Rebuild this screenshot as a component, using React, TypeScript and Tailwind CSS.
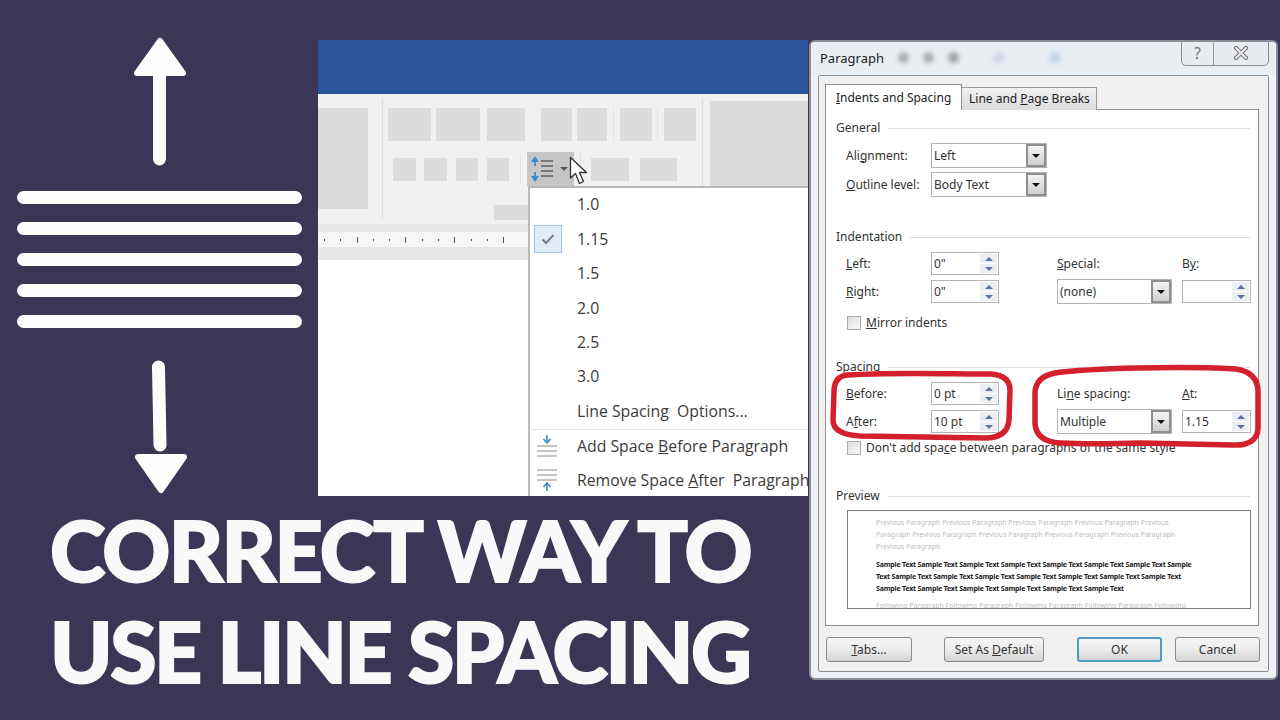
import React from "react";

const Block = ({ className }: { className: string }) => (
  <div className={`bg-[#dcdcdc] ${className}`} />
);

const menuValues = ["1.0", "1.15", "1.5", "2.0", "2.5", "3.0"];

function SideDrawing() {
  return (
    <svg width="318" height="496" viewBox="0 0 318 496" className="shrink-0">
      <g fill="#fefefe" stroke="#fefefe" strokeLinejoin="round" strokeLinecap="round">
        <path d="M160 41 L183 73 L137 73 Z" strokeWidth="6" />
        <path d="M159.5 76 V159" strokeWidth="13" fill="none" />
        <path d="M158.5 367 L160 445" strokeWidth="13" fill="none" />
        <path d="M138 457 L184 457 L161 490 Z" strokeWidth="6" />
        <path d="M23.5 197.5 H295.5 M23.5 228.5 H295.5 M23.5 259.5 H295.5 M23.5 290.5 H295.5 M23.5 321.5 H295.5" strokeWidth="13" fill="none" />
      </g>
    </svg>
  );
}

function LineSpacingIcon() {
  return (
    <svg width="24" height="28" viewBox="0 0 24 28">
      <path d="M5 1 L1 7 H9 Z M5 27 L1 21 H9 Z" fill="#3f8ac4" />
      <path d="M5 6 V11 M5 17 V22" stroke="#3f8ac4" strokeWidth="1.8" />
      <path d="M11 6 H23 M11 11 H23 M11 16 H23 M11 21 H23" stroke="#5f5f5f" strokeWidth="1.3" />
    </svg>
  );
}

function Cursor() {
  return (
    <svg width="20" height="30" viewBox="0 0 20 30" className="absolute left-[251px] top-[116px]">
      <path d="M1.5 1.5 V22 L6.5 17.5 L10.5 27.5 L14.5 25.5 L10.5 16.5 L17.5 16.5 Z" fill="#ffffff" stroke="#2f2f2f" strokeWidth="1.3" strokeLinejoin="round" />
    </svg>
  );
}

function Ruler() {
  const ticks = Array.from({ length: 12 });
  return (
    <div className="h-[15px] bg-[#f6f6f6] flex items-center pl-[6px] gap-[15.3px] mt-[8px]">
      {ticks.map((_, i) => (
        <div key={i} className={i % 3 === 2 ? "w-px h-[6px] bg-[#555555]" : "w-px h-[2px] bg-[#555555]"} />
      ))}
    </div>
  );
}

function SpacingMenu() {
  return (
    <div className="absolute left-[210px] top-[146px] w-[280px] h-[310px] bg-white border-l-2 border-t-2 border-[#b9b9b9] text-[#3b3b3b] text-[15.8px] font-['Open_Sans',sans-serif] overflow-hidden">
      {menuValues.map((v) => (
        <div key={v} className="relative h-[34.4px] flex items-center pl-[47px]">
          {v === "1.15" && (
            <div className="absolute left-[4px] top-[3px] w-[28px] h-[28px] bg-[#e1ebf8] border border-[#a8c4e4] flex items-center justify-center">
              <svg width="14" height="12" viewBox="0 0 14 12">
                <path d="M1.5 6.5 L5 10 L12.5 2" fill="none" stroke="#7c7c7c" strokeWidth="2" />
              </svg>
            </div>
          )}
          {v}
        </div>
      ))}
      <div className="h-[34.4px] flex items-center pl-[47px] whitespace-pre">Line Spacing  Options...</div>
      <div className="h-px bg-[#e3e3e3] ml-[1px]" />
      <div className="relative h-[34px] flex items-center pl-[47px] whitespace-pre">
        <svg width="22" height="24" viewBox="0 0 22 24" className="absolute left-[6px] top-[4px]">
          <path d="M11 1 V7 M7.5 5 L11 9 L14.5 5" fill="none" stroke="#3f8ac4" strokeWidth="1.6" />
          <path d="M1 12 H21 M1 17 H21 M1 22 H21" stroke="#8a8a8a" strokeWidth="1" />
        </svg>
        Add Space <u>B</u>efore Paragraph
      </div>
      <div className="relative h-[34px] flex items-center pl-[47px] whitespace-pre">
        <svg width="22" height="24" viewBox="0 0 22 24" className="absolute left-[6px] top-[4px]">
          <path d="M1 2 H21 M1 7 H21 M1 12 H21" stroke="#8a8a8a" strokeWidth="1" />
          <path d="M11 23 V16 M7.5 19 L11 15 L14.5 19" fill="none" stroke="#3f8ac4" strokeWidth="1.6" />
        </svg>
        Remove Space <u>A</u>fter  Paragraph
      </div>
    </div>
  );
}

function WordPanel() {
  return (
    <div className="relative mt-[40px] w-[490px] h-[456px] bg-white overflow-hidden">
      <div className="h-[54px] bg-[#2b579a]" />
      <div className="h-[130px] bg-[#f1f1f1] flex shadow-[0_1px_2px_rgba(0,0,0,0.15)]">
        <Block className="w-[50px] h-[101px] mt-[14px] shrink-0" />
        <div className="w-px h-[120px] mt-[4px] ml-[14px] bg-[#dedede] shrink-0" />
        <div className="w-[319px] shrink-0">
          <div className="flex mt-[14px]">
            <Block className="w-[43px] h-[33px] ml-[5px]" />
            <Block className="w-[44px] h-[33px] ml-[5px]" />
            <Block className="w-[38px] h-[33px] ml-[7px]" />
            <Block className="w-[31px] h-[33px] ml-[16px]" />
            <Block className="w-[30px] h-[33px] ml-[5px]" />
            <div className="w-px h-[33px] ml-[6px] bg-[#e4e4e4]" />
            <Block className="w-[32px] h-[33px] ml-[6px]" />
            <div className="w-px h-[33px] ml-[5px] bg-[#e4e4e4]" />
            <Block className="w-[32px] h-[33px] ml-[6px]" />
          </div>
          <div className="flex items-center mt-[11px]">
            <Block className="w-[23px] h-[23px] ml-[10px]" />
            <Block className="w-[23px] h-[23px] ml-[8px]" />
            <Block className="w-[22px] h-[23px] ml-[9px]" />
            <Block className="w-[22px] h-[23px] ml-[9px]" />
            <div className="w-px h-[30px] ml-[11px] bg-[#e0e0e0]" />
            <div className="w-[47px] h-[34px] ml-[6px] bg-[#c6c6c6] flex items-center pl-[3px] gap-[6px]">
              <LineSpacingIcon />
              <div className="w-0 h-0 border-x-[4px] border-x-transparent border-t-[4px] border-t-[#555555]" />
            </div>
            <div className="w-px h-[30px] ml-[6px] bg-[#e0e0e0]" />
            <Block className="w-[38px] h-[23px] ml-[10px]" />
            <Block className="w-[37px] h-[23px] ml-[11px]" />
          </div>
          <Block className="w-[34px] h-[15px] ml-[111px] mt-[19px]" />
        </div>
        <div className="w-px h-[120px] mt-[4px] bg-[#dedede] shrink-0" />
        <Block className="w-[98px] h-[123px] mt-[7px] ml-[7px] shrink-0" />
      </div>
      <div className="bg-[#e6e6e6] h-[36px] overflow-hidden">
        <Ruler />
      </div>
      <SpacingMenu />
      <Cursor />
    </div>
  );
}

function Title() {
  return (
    <div className="pl-[50px] pt-[3px] text-[#f9f9fa] font-['Lato',sans-serif] font-black text-[84px] leading-[101px] whitespace-nowrap [-webkit-text-stroke:2px_#f9f9fa]">
      <div className="tracking-[-1.7px]">CORRECT WAY TO</div>
      <div className="tracking-[-2.4px]">USE LINE SPACING</div>
    </div>
  );
}

function SectionLabel({ label, lineClass, className = "" }: { label: string; lineClass?: string; className?: string }) {
  return (
    <div className={`flex items-center h-[16px] pl-[10px] pr-[8px] gap-[8px] ${className}`}>
      <span>{label}</span>
      <div className={`flex-1 h-px bg-[#dcdfe3] ${lineClass ?? ""}`} />
    </div>
  );
}

function DropSelect({ value, className }: { value: string; className: string }) {
  return (
    <div className={`h-[25px] bg-white border border-[#b4b4b4] flex items-center justify-between pl-[2px] ${className}`}>
      <span>{value}</span>
      <div className="w-[20px] h-[23px] bg-gradient-to-b from-[#f4f4f4] to-[#cfcfcf] border-2 border-[#8e8e8e] flex items-center justify-center">
        <div className="w-0 h-0 border-x-[4px] border-x-transparent border-t-[4px] border-t-[#111111]" />
      </div>
    </div>
  );
}

function Spinner({ value, className = "w-[68px]" }: { value: string; className?: string }) {
  return (
    <div className={`h-[23px] bg-white border border-[#b4b4b4] flex items-center justify-between pl-[2px] pr-px ${className}`}>
      <span>{value}</span>
      <div className="w-[17px] h-[19px] flex flex-col gap-px">
        <div className="flex-1 bg-[#eceef2] flex items-center justify-center">
          <div className="w-0 h-0 border-x-[4px] border-x-transparent border-b-[4px] border-b-[#5f6fa8]" />
        </div>
        <div className="flex-1 bg-[#eceef2] flex items-center justify-center">
          <div className="w-0 h-0 border-x-[4px] border-x-transparent border-t-[4px] border-t-[#5f6fa8]" />
        </div>
      </div>
    </div>
  );
}

function CheckRow({ children, className }: { children: React.ReactNode; className: string }) {
  return (
    <div className={`flex items-center pl-[21px] gap-[5px] h-[16px] ${className}`}>
      <div className="w-[14px] h-[14px] border border-[#a9a9a9] bg-gradient-to-br from-[#dedede] to-[#f8f8f8]" />
      <span>{children}</span>
    </div>
  );
}

function DialogButton({ children, className }: { children: React.ReactNode; className: string }) {
  return (
    <div className={`h-[25px] rounded-[3px] border flex items-center justify-center bg-gradient-to-b from-[#f6f6f6] via-[#ebebeb] to-[#d4d4d4] ${className}`}>
      {children}
    </div>
  );
}

function PreviewBox() {
  return (
    <div className="ml-[21px] mt-[6px] w-[404px] h-[99px] border border-[#7d7d7d] bg-white overflow-hidden pl-[28px] pt-[6px] text-[7px] leading-[12px] whitespace-nowrap">
      <div className="text-[#bdbdbd]">
        <div>Previous Paragraph Previous Paragraph Previous Paragraph Previous Paragraph Previous</div>
        <div>Paragraph Previous Paragraph Previous Paragraph Previous Paragraph Previous Paragraph</div>
        <div>Previous Paragraph</div>
      </div>
      <div className="text-[#1a1a1a] font-bold mt-[6px] tracking-[-0.19px]">
        <div>Sample Text Sample Text Sample Text Sample Text Sample Text Sample Text Sample Text Sample</div>
        <div>Text Sample Text Sample Text Sample Text Sample Text Sample Text Sample Text Sample Text</div>
        <div>Sample Text Sample Text Sample Text Sample Text Sample Text Sample Text</div>
      </div>
      <div className="text-[#bdbdbd] mt-[5px]">Following Paragraph Following Paragraph Following Paragraph Following Paragraph Following</div>
    </div>
  );
}

function ParagraphDialog() {
  return (
    <div className="relative mt-[40px] ml-[1px] w-[469px] h-[640px] rounded-[6px] border-2 border-[#8c8c97] bg-[#eef1f5] text-[12px] text-[#333333] font-['Noto_Sans',sans-serif] overflow-hidden">
      <div className="h-[33px] flex items-start pl-[9px] pt-[7px] relative bg-[#e9eef3]">
        <span className="text-[#222222] text-[13px] leading-[18px]">Paragraph</span>
        <div className="flex gap-[14px] ml-[14px] mt-[3px] blur-[2px]">
          <div className="w-[11px] h-[11px] rounded-full bg-[#b0b0b0]" />
          <div className="w-[11px] h-[11px] rounded-full bg-[#b0b0b0]" />
          <div className="w-[11px] h-[11px] rounded-full bg-[#a4a4a4]" />
          <div className="w-[12px] h-[11px] ml-[20px] rounded-full bg-[#cfd8e8]" />
          <div className="w-[12px] h-[11px] ml-[30px] rounded-full bg-[#c3d4ea]" />
        </div>
        <div className="absolute right-[7px] top-[-2px] w-[88px] h-[26px] rounded-b-[5px] border border-[#8d8d8d] bg-[#e8ebef] flex">
          <div className="w-[32px] border-r border-[#9a9a9a] flex items-center justify-center text-[#777777] text-[16px]">?</div>
          <div className="flex-1 flex items-center justify-center">
            <svg width="16" height="14" viewBox="0 0 16 14">
              <path d="M3 2 L13 12 M13 2 L3 12" stroke="#6f6f6f" strokeWidth="4" strokeLinecap="round" />
              <path d="M3 2 L13 12 M13 2 L3 12" stroke="#f4f4f4" strokeWidth="2" strokeLinecap="round" />
            </svg>
          </div>
        </div>
      </div>
      <div className="mx-[7px] w-[451px] h-[597px] border border-[#8f8f8f] bg-[#f1f1f1] rounded-[2px] pl-[6px] pt-[8px]">
        <div className="flex items-end h-[26px] relative z-10">
          <div className="w-[137px] h-[26px] bg-white border border-b-0 border-[#8f8f8f] pl-[10px] flex items-center text-[#222222]">
            <span><u>I</u>ndents and Spacing</span>
          </div>
          <div className="w-[135px] h-[23px] bg-gradient-to-b from-[#f2f2f2] to-[#dcdcdc] border border-b-0 border-l-0 border-[#9a9a9a] pl-[7px] flex items-center text-[#222222]">
            <span>Line and <u>P</u>age Breaks</span>
          </div>
        </div>
        <div className="w-[434px] h-[517px] -mt-px bg-white border border-[#8f8f8f] pt-[10px]">
          <SectionLabel label="General" />
          <div className="flex items-center mt-[7px] pl-[20px]">
            <span className="w-[85px]">Ali<u>g</u>nment:</span>
            <DropSelect value="Left" className="w-[116px]" />
          </div>
          <div className="flex items-center mt-[4px] pl-[20px]">
            <span className="w-[85px]"><u>O</u>utline level:</span>
            <DropSelect value="Body Text" className="w-[116px]" />
          </div>

          <SectionLabel label="Indentation" className="mt-[32px]" />
          <div className="flex mt-[7px] pl-[20px]">
            <div className="w-[85px] h-[51px] flex flex-col justify-between">
              <span className="leading-[23px]"><u>L</u>eft:</span>
              <span className="leading-[23px]"><u>R</u>ight:</span>
            </div>
            <div className="w-[126px] flex flex-col gap-[5px]">
              <Spinner value='0"' />
              <Spinner value='0"' />
            </div>
            <div className="w-[125px]">
              <div className="leading-[23px]"><u>S</u>pecial:</div>
              <DropSelect value="(none)" className="w-[115px] mt-[4px]" />
            </div>
            <div>
              <div className="leading-[23px]">B<u>y</u>:</div>
              <Spinner value="" className="w-[69px] mt-[5px]" />
            </div>
          </div>
          <CheckRow className="mt-[11px]"><u>M</u>irror indents</CheckRow>

          <SectionLabel label="Spacing" className="mt-[28px]" />
          <div className="flex mt-[7px] pl-[20px]">
            <div className="w-[85px] h-[51px] flex flex-col justify-between">
              <span className="leading-[23px]"><u>B</u>efore:</span>
              <span className="leading-[23px]">A<u>f</u>ter:</span>
            </div>
            <div className="w-[126px] flex flex-col gap-[5px]">
              <Spinner value="0 pt" />
              <Spinner value="10 pt" />
            </div>
            <div className="w-[125px]">
              <div className="leading-[23px]">Li<u>n</u>e spacing:</div>
              <DropSelect value="Multiple" className="w-[115px] mt-[4px]" />
            </div>
            <div>
              <div className="leading-[23px]"><u>A</u>t:</div>
              <Spinner value="1.15" className="w-[69px] mt-[5px]" />
            </div>
          </div>
          <CheckRow className="mt-[6px]">Don't add spa<u>c</u>e between paragraphs of the same style</CheckRow>

          <SectionLabel label="Preview" className="mt-[32px]" />
          <PreviewBox />
        </div>
      </div>
      <div className="absolute left-[15px] top-[595px] flex text-[#333333]">
        <DialogButton className="w-[86px] border-[#8a8a8a]"><span><u>T</u>abs...</span></DialogButton>
        <DialogButton className="w-[100px] ml-[32px] border-[#8a8a8a]"><span>Set As <u>D</u>efault</span></DialogButton>
        <DialogButton className="w-[85px] ml-[33px] border-[#4f9cc4] border-2">OK</DialogButton>
        <DialogButton className="w-[85px] ml-[13px] border-[#8a8a8a]">Cancel</DialogButton>
      </div>
      <svg width="469" height="640" viewBox="0 0 469 640" fill="none" className="absolute left-0 top-0 pointer-events-none">
        <g stroke="#d3202c" strokeWidth="5.5" strokeLinecap="round" transform="translate(-811 -42)">
          <path d="M847 375 C890 372 950 374 991 374 C1003 375 1010 380 1010 390 L1009 420 C1008 432 1000 438 985 438 L860 436 C842 435 833 430 833 420 L834 392 C834 382 838 376 847 375 Z" />
          <path d="M1055 373 C1090 368 1180 366 1236 369 C1250 371 1258 378 1258 392 L1258 428 C1258 440 1248 446 1232 445 L1141 443 C1110 444 1080 444 1060 443 C1045 442 1036 436 1035 424 L1035 392 C1036 380 1044 375 1055 373 Z" />
        </g>
      </svg>
    </div>
  );
}

export default function App() {
  return (
    <div className="w-[1280px] h-[720px] bg-[#3c3556] flex overflow-hidden">
      <div className="w-[808px] shrink-0">
        <div className="flex">
          <SideDrawing />
          <WordPanel />
        </div>
        <Title />
      </div>
      <ParagraphDialog />
    </div>
  );
}
